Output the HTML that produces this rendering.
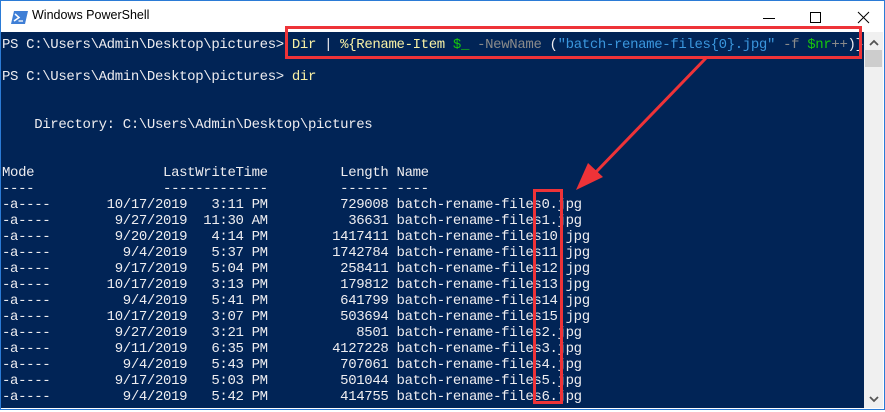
<!DOCTYPE html>
<html><head><meta charset="utf-8"><style>
*{margin:0;padding:0;box-sizing:border-box}
body{width:885px;height:412px;background:#fff;position:relative;overflow:hidden;font-family:"Liberation Sans",sans-serif}
.win{position:absolute;left:0;top:0;width:885px;height:410px;border:1px solid #2b7bd6;border-top-color:#2b7bd6}
.title{position:absolute;left:32px;top:8px;font-size:12.5px;color:#000}
.con{position:absolute;left:1px;top:32px;width:863px;height:376px;background:#012456}
.sb{position:absolute;left:864px;top:32px;width:19px;height:376px;background:#f0f0f0}
.thumb{position:absolute;left:865px;top:50px;width:17px;height:17px;background:#cdcdcd}
pre{position:absolute;left:2px;top:37px;font-family:"Liberation Mono",monospace;font-size:14px;letter-spacing:-0.35px;line-height:16px;color:#eeedf0;white-space:pre}
.y{color:#f9f1a5}.g{color:#16c60c}.gr{color:#8a8a8a}.b{color:#3a96dd}
.rb{position:absolute;border:3px solid #ee3338}
</style></head><body>
<div class="win"></div>
<svg style="position:absolute;left:11px;top:11px" width="17" height="13" viewBox="0 0 17 13"><path d="M3 0H17L14 13H0Z" fill="#3f7fd6"/><path d="M4 3L8 6.5L3 10" stroke="#fff" stroke-width="1.5" fill="none"/><path d="M7.5 10H12" stroke="#fff" stroke-width="1.3"/></svg>
<div class="title">Windows PowerShell</div>
<svg style="position:absolute;left:750px;top:10px" width="130" height="16"><path d="M13 8.5H25" stroke="#000" stroke-width="1"/><rect x="60.5" y="2.5" width="10" height="10" fill="none" stroke="#000"/><path d="M108 2L119 13M119 2L108 13" stroke="#000" stroke-width="1"/></svg>
<div class="con"></div>
<div class="sb"></div>
<div class="thumb"></div>
<svg style="position:absolute;left:866px;top:38px" width="16" height="10"><path d="M4 7L8 3L12 7" stroke="#555" stroke-width="1.8" fill="none"/></svg>
<svg style="position:absolute;left:866px;top:394px" width="16" height="10"><path d="M4 3L8 7L12 3" stroke="#555" stroke-width="1.8" fill="none"/></svg>
<pre>PS C:\Users\Admin\Desktop\pictures&gt; <span class="y">Dir</span> | <span class="y">%{Rename-Item</span> <span class="g">$_</span> <span class="gr">-NewName</span> (<span class="b">"batch-rename-files{0}.jpg"</span> <span class="gr">-f</span> <span class="g">$nr</span><span class="gr">++</span>)}

PS C:\Users\Admin\Desktop\pictures&gt; <span class="y">dir</span>


    Directory: C:\Users\Admin\Desktop\pictures


Mode                LastWriteTime         Length Name
----                -------------         ------ ----
-a----       10/17/2019   3:11 PM         729008 batch-rename-files0.jpg
-a----        9/27/2019  11:30 AM          36631 batch-rename-files1.jpg
-a----        9/20/2019   4:14 PM        1417411 batch-rename-files10.jpg
-a----         9/4/2019   5:37 PM        1742784 batch-rename-files11.jpg
-a----        9/17/2019   5:04 PM         258411 batch-rename-files12.jpg
-a----       10/17/2019   3:13 PM         179812 batch-rename-files13.jpg
-a----         9/4/2019   5:41 PM         641799 batch-rename-files14.jpg
-a----       10/17/2019   3:07 PM         503694 batch-rename-files15.jpg
-a----        9/27/2019   3:21 PM           8501 batch-rename-files2.jpg
-a----        9/11/2019   6:35 PM        4127228 batch-rename-files3.jpg
-a----         9/4/2019   5:43 PM         707061 batch-rename-files4.jpg
-a----        9/17/2019   5:03 PM         501044 batch-rename-files5.jpg
-a----         9/4/2019   5:42 PM         414755 batch-rename-files6.jpg</pre>
<div class="rb" style="left:285px;top:26px;width:577px;height:33px"></div>
<div class="rb" style="left:533px;top:189px;width:30px;height:215px"></div>
<svg style="position:absolute;left:0;top:0" width="885" height="412"><path d="M707 57L596 172" stroke="#ee3338" stroke-width="3"/><path d="M576 190L588 163L603 177Z" fill="#ee3338"/></svg>
</body></html>
